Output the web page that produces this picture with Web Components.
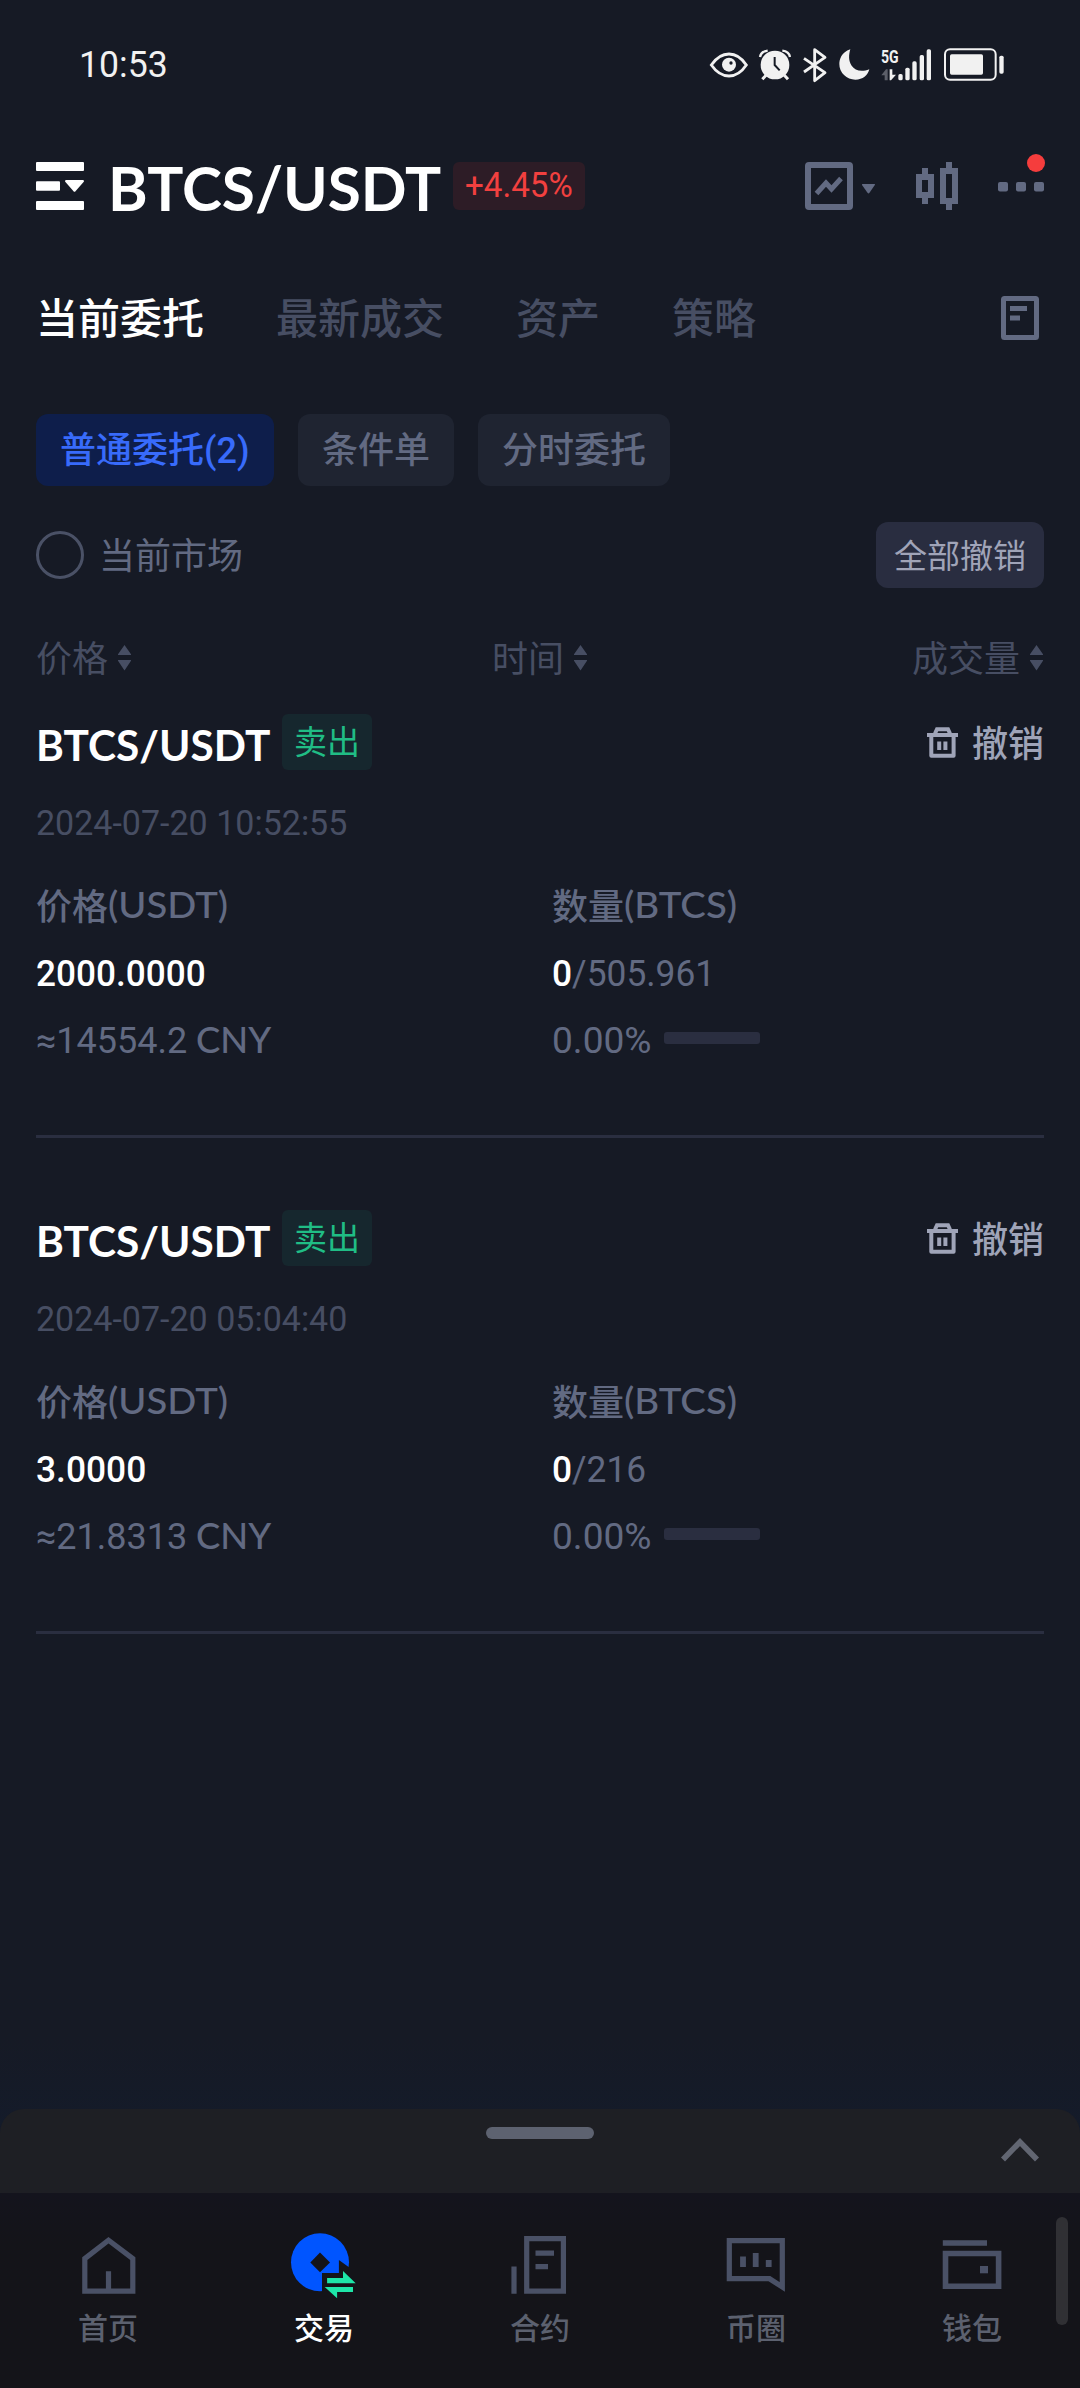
<!DOCTYPE html>
<html lang="zh-CN">
<head>
<meta charset="utf-8">
<title>BTCS/USDT</title>
<style>
html,body{margin:0;background:#161a25}
body{width:1080px;height:2388px;overflow:hidden;font-family:"Noto Sans CJK SC",sans-serif}
</style>
</head>
<body>
<trade-app></trade-app>
<script>
const define = (name, html, setup) => customElements.define(name, class extends HTMLElement {
  connectedCallback() {
    if (this.shadowRoot) return;
    const root = this.attachShadow({ mode: 'open' });
    const t = document.createElement('template');
    t.innerHTML = typeof html === 'function' ? html(this) : html;
    root.append(t.content.cloneNode(true));
    if (setup) setup(this, root);
  }
});

/* Text squeezed or stretched horizontally to a given advance width. */
define('fit-text', el => `<style>
  :host{display:inline-block;width:${el.getAttribute('w')}px;white-space:pre;font-family:${el.hasAttribute('word') ? 'Lato' : 'Roboto'},"Noto Sans CJK SC",sans-serif}
  span{display:inline-block;transform-origin:0 50%}
</style><span><slot></slot></span>`, (el, root) => {
  const s = root.querySelector('span');
  s.style.transform = `scaleX(${el.getAttribute('w') / s.offsetWidth})`;
});

/* Icons are described as [width, height, viewBox, markup]. */
const ICONS = {
  eye: [38, 26, '89 94 114 78', '<path d="M93 133Q116 100 146 100Q176 100 198 133Q176 166 146 166Q116 166 93 133Z" fill="none" stroke="#f1f1f1" stroke-width="8.5"/><circle cx="146" cy="132" r="21" fill="#f1f1f1"/><circle cx="152" cy="127" r="5" fill="#161a25"/>'],
  alarm: [32, 32, '237 84 96 96', '<g fill="none" stroke="#f1f1f1"><path d="M240 108Q243 91 263 89M330 108Q327 91 307 89" stroke-width="7"/><path d="M258 163L247 175M313 163L324 175" stroke-width="9"/></g><circle cx="285" cy="132" r="43" fill="#f1f1f1"/><path d="M284 108V132L299 148" fill="none" stroke="#161a25" stroke-width="6"/>'],
  bt: [24, 34, '369 82 72 102', '<path d="M372 113L435 156L404 180V87L435 110L372 154" fill="none" stroke="#f1f1f1" stroke-width="8.5" stroke-linejoin="round"/>'],
  moon: [31, 31, '477 86 93 93', '<path d="M511 87C484 96 478 118 478 131A48 47 0 0 0 526 178C549 178 563 165 568 147C542 157 524 149 515 136C505 121 506 104 511 87Z" fill="#f1f1f1"/>'],
  signal: [50, 32, '604 84 150 96', '<text x="604" y="127" font-family="Roboto" font-size="55" font-weight="700" fill="#f1f1f1" textLength="53" lengthAdjust="spacingAndGlyphs">5G</text><path d="M605 163L619 145H624V178H615V163Z" fill="#5c5f69"/><path d="M630 145H638V161H649L634 178H630Z" fill="#f1f1f1"/><g fill="#f1f1f1"><rect x="656" y="159" width="13" height="19" rx="5"/><rect x="677" y="140" width="13" height="38" rx="5"/><rect x="698" y="121" width="13" height="57" rx="5"/><rect x="720" y="102" width="13" height="76" rx="5"/><rect x="741" y="85" width="13" height="93" rx="5"/></g>'],
  battery: [60, 34, '792 84 180 102', '<rect x="795" y="88" width="152" height="91" rx="15" fill="none" stroke="#f1f1f1" stroke-width="6"/><rect x="810" y="103" width="99" height="61" rx="5" fill="#f1f1f1"/><rect x="958" y="107" width="13" height="54" rx="5" fill="#f1f1f1"/>'],
  menu: [48, 48, '0 0 48 48', '<g fill="#fff"><rect width="48" height="9" rx="1"/><rect y="19.3" width="24" height="9.5" rx="1"/><path d="M29.5 18H47.5L48 19.5L39.5 29.3Q38.5 30.3 37.5 29.3L29 19.5Z"/><rect y="39" width="48" height="9" rx="1"/></g>'],
  chart: [48, 48, '0 0 48 48', '<rect x="3" y="3" width="42" height="42" rx="1" fill="none" stroke="#626a82" stroke-width="6"/><path d="M11.5 31.5L21 21L26.5 27L36 16.5" fill="none" stroke="#626a82" stroke-width="5"/>'],
  caret: [13, 10, '0 0 13 10', '<path d="M0 .5Q0 0 .5 0H12.5Q13 0 13 .8L7.5 8.8Q6.5 10 5.5 8.8L0 1Z" fill="#626a82"/>'],
  candles: [42, 48, '0 0 42 48', '<path d="M9 6v9M9 33v9M33 0v9M33 39v9" stroke="#626a82" stroke-width="6"/><rect x="3" y="15" width="12" height="18" fill="none" stroke="#626a82" stroke-width="6"/><rect x="27" y="9" width="12" height="30" fill="none" stroke="#626a82" stroke-width="6"/>'],
  dots: [46, 10, '0 0 46 10', '<g fill="#626a82"><rect width="10" height="9.5" rx="2"/><rect x="18" width="10" height="9.5" rx="2"/><rect x="36" width="10" height="9.5" rx="2"/></g>'],
  doc: [38, 44, '0 0 38 44', '<rect x="2.5" y="2.5" width="33" height="39" rx="1" fill="none" stroke="#626a82" stroke-width="5"/><path d="M9 12.4H26M9 22H19" stroke="#626a82" stroke-width="5"/>'],
  sort: [13, 26, '0 0 13 26', '<path d="M6.5 0L13 9.3V10H0V9.3ZM0 15H13V15.7L6.5 25.5L0 15.7Z" fill="#474e63"/>'],
  trash: [31, 31, '0 0 31 31', '<path d="M8 6.5L10 2.2H21L23 6.5M0 8H31" fill="none" stroke="#9fa4b8" stroke-width="4"/><path d="M4.3 8V28.8H26.6V8" fill="none" stroke="#9fa4b8" stroke-width="4" stroke-linejoin="round"/><path d="M12.2 14.5v8.5M18.4 14.5v8.5" stroke="#9fa4b8" stroke-width="4"/>'],
  up: [38, 24, '0 0 38 24', '<path d="M2 21.5L19 4L36 21.5" fill="none" stroke="#626672" stroke-width="5.6"/>'],
  home: [66, 66, '75 2233 66 66', '<path d="M84.8 2291.2V2258.6L108.5 2240.2L132.8 2258.6V2291.2ZM108.5 2291V2271.3" fill="none" stroke="#4a5166" stroke-width="5.2"/>'],
  trade: [66, 66, '291 2233 66 66', '<circle cx="320" cy="2262.3" r="29" fill="#0055ff"/><path d="M320 2252.5L330 2262.4L320 2272.3L310.3 2262.4Z" fill="#141419"/><path d="M322 2273H338.9V2260L350 2268V2295H322Z" fill="#141419"/><path d="M327.1 2278H343V2271L355.7 2283.2H327.1ZM324.7 2287H353V2292H337.1V2298.2Z" fill="#1ee6a8"/>'],
  contract: [66, 66, '507 2233 66 66', '<path d="M514 2266.5V2293.7M526.7 2238.6H563.4V2291.2H526.7ZM535.5 2253.2H554M535.5 2266.7H548" fill="none" stroke="#4a5166" stroke-width="5.2"/>'],
  forum: [66, 66, '724 2233 66 66', '<path d="M730.3 2240.6H783.3V2287L770.5 2278.7H730.3Z" fill="none" stroke="#4a5166" stroke-width="5.2"/><path d="M744 2256.5V2267M756.7 2253V2267M769.7 2260V2267" stroke="#4a5166" stroke-width="5.8"/>'],
  wallet: [66, 66, '939 2233 66 66', '<path d="M942.8 2243H987M945.5 2253.5H998.6V2286.3H945.5Z" fill="none" stroke="#4a5166" stroke-width="5.6"/><rect x="980" y="2266" width="8" height="7.3" fill="#4a5166"/>']
};
define('x-icon', el => {
  const [w, h, vb, body] = ICONS[el.getAttribute('name')];
  return `<style>:host{display:block;flex:none;width:${w}px;height:${h}px}svg{display:block;overflow:visible}</style><svg width="${w}" height="${h}" viewBox="${vb}">${body}</svg>`;
});

define('status-bar', `<style>
  :host{display:flex;align-items:center;height:129px;box-sizing:border-box;padding:0 76px 0 79px;color:#f1f1f1;font:450 36px/40px Roboto}
  .i{margin-left:auto;display:flex;align-items:center}
</style><fit-text w="89">10:53</fit-text>
<div class="i"><x-icon name="eye"></x-icon><x-icon name="alarm" style="margin-left:11px"></x-icon><x-icon name="bt" style="margin-left:12px"></x-icon><x-icon name="moon" style="margin-left:12px"></x-icon><x-icon name="signal" style="margin-left:11px"></x-icon><x-icon name="battery" style="margin-left:13px"></x-icon></div>`);

define('pair-header', `<style>
  :host{display:flex;align-items:center;height:114px;padding:0 36px}
  .t{color:#fff;font-size:61px;font-weight:700;line-height:70px;margin:4px 0 0 24px}
  .b{margin-left:12px;width:132px;height:48px;border-radius:6px;background:#2d1c26;color:#f2403f;display:flex;align-items:center;justify-content:center;font-size:35px;line-height:50px}
  .r{margin-left:auto;display:flex;align-items:center}
  .m{position:relative;margin-left:40px;padding-top:2px}
  .m i{position:absolute;left:29px;top:-26px;width:18px;height:18px;border-radius:50%;background:#f53d3d}
</style><x-icon name="menu"></x-icon><fit-text word w="333" class="t">BTCS/USDT</fit-text>
<div class="b"><fit-text w="108">+4.45%</fit-text></div>
<div class="r"><x-icon name="chart"></x-icon><x-icon name="caret" style="margin:6px 0 0 9px"></x-icon><x-icon name="candles" style="margin-left:41px"></x-icon><div class="m"><x-icon name="dots"></x-icon><i></i></div></div>`);

define('tab-strip', `<style>
  :host{display:flex;align-items:center;height:150px;padding:0 41px 0 36px;color:#474e63;font-weight:500;font-size:42px;line-height:56px}
  span{margin-right:72px;padding-bottom:5px}.on{color:#fff}x-icon{margin-left:auto}
</style><span class="on">当前委托</span><span>最新成交</span><span>资产</span><span>策略</span><x-icon name="doc"></x-icon>`);

define('filter-chip', `<style>
  :host{display:block;box-sizing:border-box;height:72px;padding:0 24px;border-radius:12px;background:#1f2431;color:#626a82;font-weight:500;font-size:36px;line-height:66px;white-space:nowrap}
  :host([on]){background:#0e1e4b;color:#386bfb}
</style><slot></slot>`);

define('order-tools', `<style>
  :host{display:block;padding:21px 36px 0}
  .c{display:flex;gap:24px}
  .r{display:flex;align-items:center;margin-top:36px;height:66px;color:#626a82;font-size:36px;line-height:60px}
  .o{box-sizing:border-box;width:48px;height:48px;border:3px solid #4a5166;border-radius:50%;margin-right:15px}
  .r span{padding-bottom:5px}
  .all{margin-left:auto;height:66px;padding:0 18px;border-radius:12px;background:#292d40;color:#a0a4b8;font-size:33px;line-height:64px}
  .s{display:grid;grid-template-columns:1fr 1fr 1fr;margin-top:42px;height:55px;color:#474e63;font-size:36px;line-height:51px}
  .s div{display:flex;align-items:center;gap:10px;justify-content:center;padding-right:1px}
  .s div:first-child{justify-content:flex-start}.s div:last-child{justify-content:flex-end}
  .s span{padding-bottom:3px}
</style>
<div class="c"><filter-chip on>普通委托<fit-text w="46">(2)</fit-text></filter-chip><filter-chip>条件单</filter-chip><filter-chip>分时委托</filter-chip></div>
<div class="r"><i class="o"></i><span>当前市场</span><div class="all">全部撤销</div></div>
<div class="s"><div><span>价格</span><x-icon name="sort"></x-icon></div><div><span>时间</span><x-icon name="sort"></x-icon></div><div><span>成交量</span><x-icon name="sort"></x-icon></div></div>`);

define('order-card', el => {
  const a = n => el.getAttribute(n);
  return `<style>
  :host{display:block;margin:0 36px;font-size:36px}
  .h{display:flex;align-items:center;height:56px}
  .p{color:#fff;font-size:41.5px;font-weight:700;line-height:50px;margin-top:5px}
  .b{margin-left:12px;width:90px;height:56px;border-radius:6px;background:#16272e;color:#20bd85;font-size:33px;line-height:53px;text-align:center}
  .x{margin-left:auto;display:flex;align-items:center;gap:14px;color:#9fa4b8;font-weight:500;line-height:52px}
  .x span{padding-bottom:3px}
  .d{display:flex;gap:9px;margin-top:28px;height:51px;line-height:52px;color:#474e63;font-size:35px}
  .g{display:grid;grid-template-columns:1fr 1fr;margin-top:22px;color:#626a82}
  .g>div{display:flex;align-items:center;height:67px;box-sizing:border-box;line-height:60px;white-space:pre;padding-top:2px;font-weight:450}
  .g>.l{height:68px;padding-top:0;padding-bottom:2px;font-weight:500}
  .g>div:nth-child(even){padding-left:12px}
  .g>.w,.w{color:#fff;font-weight:500}
  .cny{margin-top:-4px}
  .bar{width:96px;height:12px;border-radius:3px;background:#2a2e40;margin:0 0 5px 12px}
  hr{margin:62px 0 0;border:0;height:3px;background:#2a2e40}
</style>
<div class="h"><fit-text word w="234" class="p">BTCS/USDT</fit-text><div class="b">卖出</div><div class="x"><x-icon name="trash"></x-icon><span>撤销</span></div></div>
<fit-text class="d" w="311">${a('time')}</fit-text>
<div class="g"><div class="l">价格<fit-text word w="120">(USDT)</fit-text></div><div class="l">数量<fit-text word w="113">(BTCS)</fit-text></div>
<div class="w"><fit-text w="170">${a('price')}</fit-text></div><div><fit-text w="${a('amount-w')}"><span class="w">0</span>/${a('amount')}</fit-text></div>
<div><fit-text w="160">≈${a('cny')} </fit-text><fit-text word w="75" class="cny">CNY</fit-text></div><div><fit-text w="100">0.00%</fit-text><i class="bar"></i></div></div><hr>`.replace('w="170"', `w="${a('price-w')}"`);
});

define('bottom-sheet', `<style>
  :host{display:block;margin-top:auto;padding-top:72px;background:linear-gradient(#161a25,#141b2a 60%)}
  .s{position:relative;display:flex;align-items:flex-start;justify-content:center;box-sizing:border-box;height:84px;padding-top:18px;background:#1e1f24;border-radius:24px 24px 0 0}
  .s i{width:108px;height:12px;border-radius:6px;background:#5d6270}
  x-icon{position:absolute;right:41px;top:29px}
</style><div class="s"><i></i><x-icon name="up"></x-icon></div>`);

define('nav-item', el => `<style>
  :host{display:flex;flex-direction:column;align-items:center;flex:1;color:#5c616f;font-weight:500;font-size:30px;line-height:44px;padding-top:40px}
  :host([on]){color:#fff}
  span{margin-top:5px}
</style><x-icon name="${el.getAttribute('icon')}"></x-icon><span><slot></slot></span>`);

define('nav-bar', `<style>
  :host{display:flex;position:relative;height:195px;background:linear-gradient(#14141d,#141419 25%)}
  .sb{position:absolute;left:1056px;top:24px;width:12px;height:108px;border-radius:6px;background:#303034}
</style><nav-item icon="home">首页</nav-item><nav-item icon="trade" on>交易</nav-item><nav-item icon="contract">合约</nav-item><nav-item icon="forum">币圈</nav-item><nav-item icon="wallet">钱包</nav-item><i class="sb"></i>`);

define('trade-app', `<style>
  :host{display:flex;flex-direction:column;width:1080px;height:2388px;background:#161a25}
  .a{margin-top:29px}.b{margin-top:72px}
</style><status-bar></status-bar><pair-header></pair-header><tab-strip></tab-strip><order-tools></order-tools>
<order-card class="a" time="2024-07-20 10:52:55" price="2000.0000" price-w="170" amount="505.961" amount-w="163" cny="14554.2"></order-card>
<order-card class="b" time="2024-07-20 05:04:40" price="3.0000" price-w="110" amount="216" amount-w="94" cny="21.8313"></order-card>
<bottom-sheet></bottom-sheet><nav-bar></nav-bar>`);
</script>
</body>
</html>
